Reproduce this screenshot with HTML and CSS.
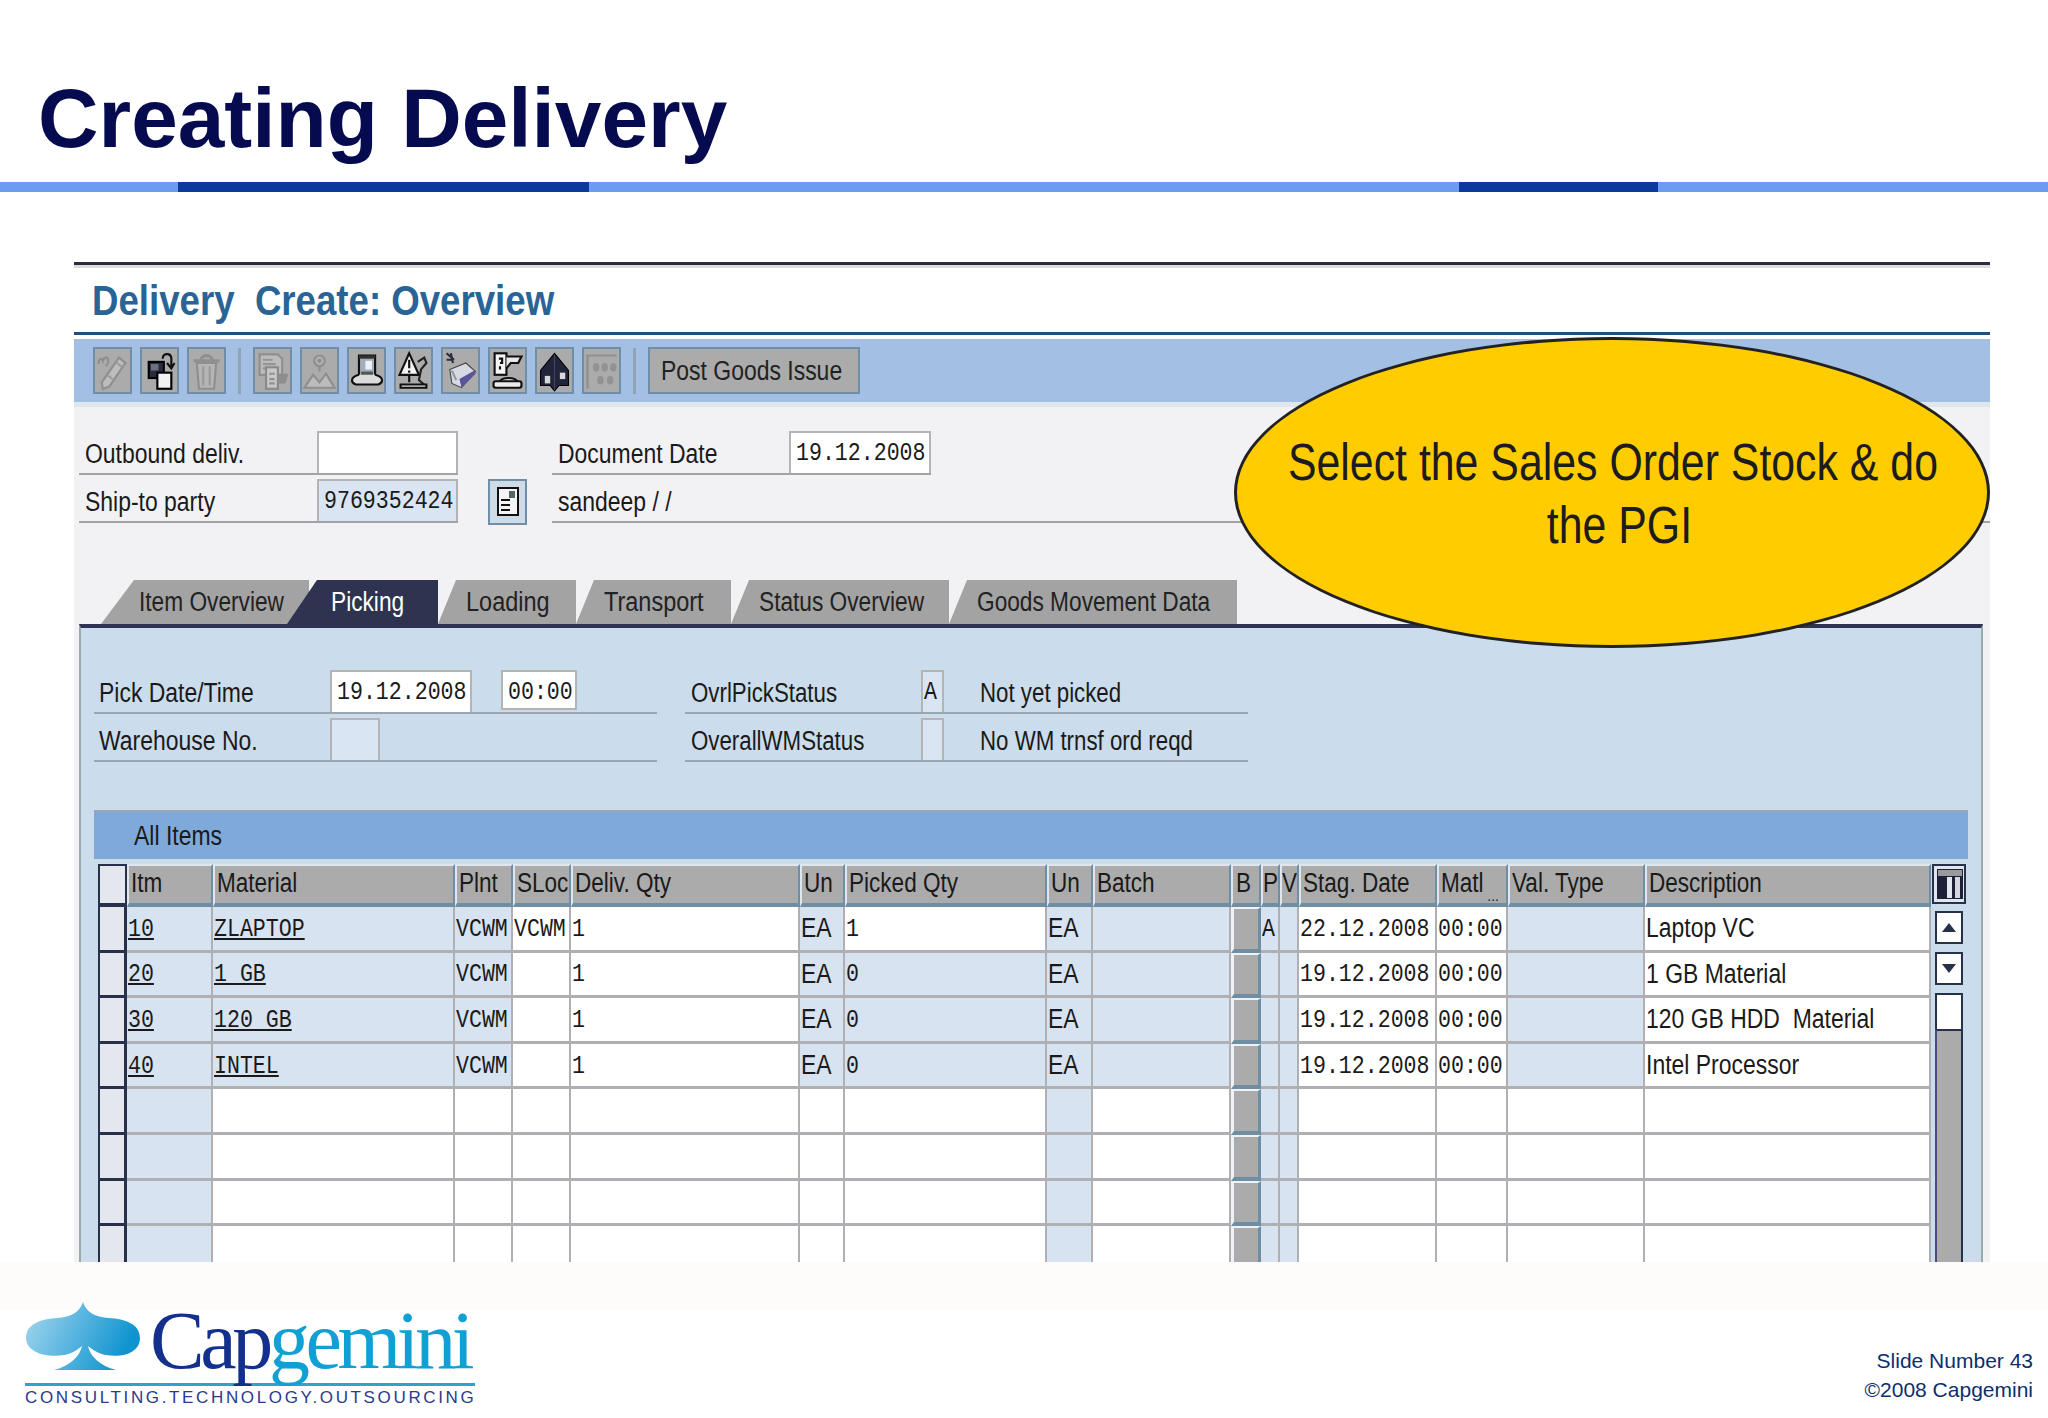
FILE: index.html
```html
<!DOCTYPE html>
<html lang="en">
  <head>
    <meta charset="UTF-8" />
    <title>Creating Delivery</title>
    <link rel="stylesheet" href="styles.css">
  </head>
  <body>
    <div class="slide">
      <h1 class="slide-title">Creating Delivery</h1>
      <div class="rule">
        <div class="rule-a"></div>
        <div class="rule-b"></div>
        <div class="rule-c"></div>
        <div class="rule-d"></div>
        <div class="rule-e"></div>
      </div>

      <div class="sap">
        <div class="sap-title"><span class="t">Delivery  Create: Overview</span></div>

        <!-- toolbar -->
        <div class="toolbar">
          <div class="tool off">
            <svg viewBox="0 0 32 40"><path d="M22 8l6 5-15 22-6 2-1-6z" fill="#bdbdbd" stroke="#8f8f8f" stroke-width="2"/><path d="M19 12l6 5M11 24l5 4" stroke="#9c9c9c" stroke-width="2"/><path d="M3 14c0-5 3-6 4-3 1-4 5-4 5 0 0 3-1 3-2 5" fill="none" stroke="#8f8f8f" stroke-width="2"/></svg>
          </div>
          <div class="tool">
            <svg viewBox="0 0 32 40"><rect x="6" y="12" width="14" height="15" fill="#2a2d40" stroke="#000" stroke-width="2"/><rect x="8" y="14" width="7" height="6" fill="#6d7080"/><rect x="14" y="22" width="13" height="15" fill="#f2f2f2" stroke="#000" stroke-width="2"/><path d="M19 9c0-5 7-6 8-1v9M23 13l4 5 3-5" fill="none" stroke="#111" stroke-width="2"/></svg>
          </div>
          <div class="tool off">
            <svg viewBox="0 0 32 40"><path d="M4 11h24M11 10c0-5 10-5 10 0" fill="none" stroke="#8f8f8f" stroke-width="3"/><path d="M7 13h18l-2 24H9z" fill="#b5b5b5" stroke="#8f8f8f" stroke-width="2"/><path d="M13 16v18M19 16v18" stroke="#9a9a9a" stroke-width="2"/></svg>
          </div>
          <div class="tool-sep"></div>
          <div class="tool off">
            <svg viewBox="0 0 32 40"><path d="M4 5h17l4 4v15H4z" fill="#bcbcbc" stroke="#8f8f8f" stroke-width="2"/><path d="M7 10h9M7 14h12M7 18h5" stroke="#959595" stroke-width="2"/><rect x="10" y="17" width="11" height="20" fill="#c8c8c8" stroke="#8a8a8a" stroke-width="2"/><path d="M13 23h5M13 28h5M13 32h5" stroke="#8f8f8f" stroke-width="2"/><path d="M21 23h10l-3 9h-7z" fill="#8d8d8d"/></svg>
          </div>
          <div class="tool off">
            <svg viewBox="0 0 32 40"><circle cx="16" cy="11" r="5" fill="#b0b0b0" stroke="#8f8f8f" stroke-width="2"/><circle cx="16" cy="11" r="2" fill="#8f8f8f"/><path d="M16 16v5" stroke="#8f8f8f" stroke-width="2"/><path d="M2 36l8-12 6 7 6-8 8 13z" fill="#bcbcbc" stroke="#8f8f8f" stroke-width="2"/></svg>
          </div>
          <div class="tool">
            <svg viewBox="0 0 32 40"><path d="M9 6h15v22H9z" fill="#a4aebb" stroke="#111" stroke-width="2"/><path d="M9 6h15v3H9z" fill="#333"/><rect x="15" y="11" width="6" height="8" fill="#eef2f6"/><rect x="11" y="21" width="11" height="4" fill="#555"/><path d="M9 24c-8 2-8 7-3 9h21c5-2 5-7-3-9" fill="#dcdcdc" stroke="#111" stroke-width="2"/></svg>
          </div>
          <div class="tool">
            <svg viewBox="0 0 32 40"><path d="M12 4L3 24h18z" fill="#f4f4f4" stroke="#111" stroke-width="2"/><path d="M12 10v8M12 20v2" stroke="#111" stroke-width="2"/><path d="M20 12l6-4 2 5-5 6-2 10 6 5" fill="none" stroke="#222" stroke-width="2"/><path d="M12 24v7M4 33h24v3H4z" fill="#e0e0e0" stroke="#111" stroke-width="2"/></svg>
          </div>
          <div class="tool">
            <svg viewBox="0 0 32 40"><path d="M3 4l7 6M7 4l2 9M3 10h6" stroke="#2a2d40" stroke-width="2"/><path d="M6 19l15-6 9 8-13 15-9-4z" fill="#d7d9e4" stroke="#444" stroke-width="1"/><path d="M15 28l14-8 1 3-13 13z" fill="#5a5599"/><path d="M8 20l4 9" stroke="#999" stroke-width="2"/></svg>
          </div>
          <div class="tool">
            <svg viewBox="0 0 32 40"><rect x="4" y="4" width="11" height="20" fill="#f4f4f4" stroke="#111" stroke-width="2"/><path d="M8 9h3v4H9M9 16v3" fill="none" stroke="#111" stroke-width="2"/><path d="M15 7h14l-3 6h-7l-4 5" fill="#e8e8e8" stroke="#111" stroke-width="2"/><path d="M9 30c2-4 14-4 16 0" fill="#ddd" stroke="#111" stroke-width="2"/><rect x="3" y="30" width="26" height="6" rx="2" fill="#ececec" stroke="#111" stroke-width="2"/></svg>
          </div>
          <div class="tool">
            <svg viewBox="0 0 32 40"><path d="M16 4l13 16v14h-9l-4 5-4-5H3V20z" fill="#22243c" stroke="#000"/><path d="M16 5v33" stroke="#44465e"/><rect x="7" y="25" width="5" height="7" fill="#d8d8d8"/><rect x="21" y="22" width="5" height="6" fill="#d8d8d8"/></svg>
          </div>
          <div class="tool off">
            <svg viewBox="0 0 32 40"><path d="M3 37V6h27" fill="none" stroke="#8f8f8f" stroke-width="2"/><ellipse cx="11" cy="17" rx="3" ry="4" fill="#929292"/><ellipse cx="19" cy="17" rx="3" ry="4" fill="#929292"/><ellipse cx="27" cy="17" rx="3" ry="4" fill="#929292"/><ellipse cx="15" cy="29" rx="3" ry="4" fill="#929292"/><ellipse cx="24" cy="29" rx="3" ry="4" fill="#929292"/></svg>
          </div>
          <div class="tool-sep"></div>
          <div class="tool-btn"><span class="t">Post Goods Issue</span></div>
        </div>

        <div class="sap-body">
          <!-- header fields -->
          <div class="head-form">
            <div class="field">
              <span class="label"><span class="t">Outbound deliv.</span></span>
              <span class="input head-input"></span>
            </div>
            <div></div>
            <div class="field field-short">
              <span class="label doc-label"><span class="t">Document Date</span></span>
              <span class="input date-input"><span class="m">19.12.2008</span></span>
            </div>
            <div class="field">
              <span class="label"><span class="t">Ship-to party</span></span>
              <span class="input readonly head-input"><span class="m">9769352424</span></span>
            </div>
            <div class="addr-cell">
              <div class="addr-btn">
                <svg viewBox="0 0 30 36" width="30" height="36"><rect x="5" y="4" width="20" height="27" fill="#f5f5f5" stroke="#111" stroke-width="2"/><rect x="16" y="7" width="6" height="7" fill="#566"/><path d="M8 16h9M8 21h9M8 26h9" stroke="#111" stroke-width="2"/></svg>
              </div>
            </div>
            <div class="field">
              <span class="label doc-label"><span class="t">sandeep / /</span></span>
            </div>
          </div>

          <!-- tabs -->
          <div class="tabs">
            <div class="tab tab-first"><span class="t">Item Overview</span></div>
            <div class="tab tab-active"><span class="t">Picking</span></div>
            <div class="tab tab-wide"><span class="t">Loading</span></div>
            <div class="tab tab-wide"><span class="t">Transport</span></div>
            <div class="tab"><span class="t">Status Overview</span></div>
            <div class="tab"><span class="t">Goods Movement Data</span></div>
          </div>

          <div class="panel">
            <div class="pick-form">
              <div class="pick-col">
                <div class="field">
                  <span class="label pick-label"><span class="t">Pick Date/Time</span></span>
                  <span class="input pick-date"><span class="m">19.12.2008</span></span>
                  <span class="input pick-time"><span class="m">00:00</span></span>
                </div>
                <div class="field">
                  <span class="label pick-label"><span class="t">Warehouse No.</span></span>
                  <span class="input readonly wh-input"></span>
                </div>
              </div>
              <div class="pick-col status-col">
                <div class="field">
                  <span class="label status-label"><span class="t">OvrlPickStatus</span></span>
                  <span class="input readonly status-input"><span class="m">A</span></span>
                  <span class="label status-text"><span class="t">Not yet picked</span></span>
                </div>
                <div class="field">
                  <span class="label status-label"><span class="t">OverallWMStatus</span></span>
                  <span class="input readonly status-input"></span>
                  <span class="label status-text"><span class="t">No WM trnsf ord reqd</span></span>
                </div>
              </div>
            </div>

            <!-- all items table -->
            <div class="group">
              <div class="group-title"><span class="t">All Items</span></div>
              <div class="grid-wrap">
                <table class="items">
                  <colgroup>
                    <col class="c-sel"><col class="c-itm"><col class="c-mat"><col class="c-pl"><col class="c-pl">
                    <col class="c-qty"><col class="c-un1"><col class="c-pick"><col class="c-un2"><col class="c-batch">
                    <col class="c-b"><col class="c-p"><col class="c-p"><col class="c-date"><col class="c-time">
                    <col class="c-val"><col class="c-desc">
                  </colgroup>
                  <thead>
                    <tr>
                      <th class="sel-head"></th><th><span class="t">Itm</span></th><th><span class="t">Material</span></th><th><span class="t">Plnt</span></th><th><span class="t">SLoc</span></th>
                      <th><span class="t">Deliv. Qty</span></th><th><span class="t">Un</span></th><th><span class="t">Picked Qty</span></th><th><span class="t">Un</span></th><th><span class="t">Batch</span></th>
                      <th class="th-center"><span class="t">B</span></th><th class="th-tight"><span class="t">P</span></th><th class="th-tight"><span class="t">V</span></th><th><span class="t">Stag. Date</span></th><th class="th-matl"><span class="t">Matl</span><span class="dots">...</span></th>
                      <th><span class="t">Val. Type</span></th><th><span class="t">Description</span></th>
                    </tr>
                  </thead>
                  <tbody>
                    <tr>
                      <td class="sel"></td><td class="blue"><u class="m">10</u></td><td class="blue"><u class="m">ZLAPTOP</u></td><td class="blue"><span class="m">VCWM</span></td><td><span class="m">VCWM</span></td>
                      <td><span class="m">1</span></td><td class="blue"><span class="t">EA</span></td><td><span class="m">1</span></td><td class="blue"><span class="t">EA</span></td><td class="blue"></td>
                      <td class="btn"></td><td class="blue"><span class="m">A</span></td><td class="blue"></td><td><span class="m">22.12.2008</span></td><td><span class="m">00:00</span></td>
                      <td class="blue"></td><td><span class="t">Laptop VC</span></td>
                    </tr>
                    <tr>
                      <td class="sel"></td><td class="blue"><u class="m">20</u></td><td class="blue"><u class="m">1 GB</u></td><td class="blue"><span class="m">VCWM</span></td><td></td>
                      <td><span class="m">1</span></td><td class="blue"><span class="t">EA</span></td><td class="blue"><span class="m">0</span></td><td class="blue"><span class="t">EA</span></td><td class="blue"></td>
                      <td class="btn"></td><td class="blue"></td><td class="blue"></td><td><span class="m">19.12.2008</span></td><td><span class="m">00:00</span></td>
                      <td class="blue"></td><td><span class="t">1 GB Material</span></td>
                    </tr>
                    <tr>
                      <td class="sel"></td><td class="blue"><u class="m">30</u></td><td class="blue"><u class="m">120 GB</u></td><td class="blue"><span class="m">VCWM</span></td><td></td>
                      <td><span class="m">1</span></td><td class="blue"><span class="t">EA</span></td><td class="blue"><span class="m">0</span></td><td class="blue"><span class="t">EA</span></td><td class="blue"></td>
                      <td class="btn"></td><td class="blue"></td><td class="blue"></td><td><span class="m">19.12.2008</span></td><td><span class="m">00:00</span></td>
                      <td class="blue"></td><td><span class="t">120 GB HDD  Material</span></td>
                    </tr>
                    <tr>
                      <td class="sel"></td><td class="blue"><u class="m">40</u></td><td class="blue"><u class="m">INTEL</u></td><td class="blue"><span class="m">VCWM</span></td><td></td>
                      <td><span class="m">1</span></td><td class="blue"><span class="t">EA</span></td><td class="blue"><span class="m">0</span></td><td class="blue"><span class="t">EA</span></td><td class="blue"></td>
                      <td class="btn"></td><td class="blue"></td><td class="blue"></td><td><span class="m">19.12.2008</span></td><td><span class="m">00:00</span></td>
                      <td class="blue"></td><td><span class="t">Intel Processor</span></td>
                    </tr>
                    <tr>
                      <td class="sel"></td><td class="blue"></td><td></td><td></td><td></td><td></td><td></td><td></td><td class="blue"></td><td></td>
                      <td class="btn"></td><td class="blue"></td><td class="blue"></td><td></td><td></td><td></td><td></td>
                    </tr>
                    <tr>
                      <td class="sel"></td><td class="blue"></td><td></td><td></td><td></td><td></td><td></td><td></td><td class="blue"></td><td></td>
                      <td class="btn"></td><td class="blue"></td><td class="blue"></td><td></td><td></td><td></td><td></td>
                    </tr>
                    <tr>
                      <td class="sel"></td><td class="blue"></td><td></td><td></td><td></td><td></td><td></td><td></td><td class="blue"></td><td></td>
                      <td class="btn"></td><td class="blue"></td><td class="blue"></td><td></td><td></td><td></td><td></td>
                    </tr>
                    <tr>
                      <td class="sel"></td><td class="blue"></td><td></td><td></td><td></td><td></td><td></td><td></td><td class="blue"></td><td></td>
                      <td class="btn"></td><td class="blue"></td><td class="blue"></td><td></td><td></td><td></td><td></td>
                    </tr>
                  </tbody>
                </table>

                <div class="scroll">
                  <div class="config">
                    <svg viewBox="0 0 26 30" width="26" height="30"><rect width="26" height="30" fill="#1d2036"/><rect x="1" y="1" width="24" height="6" fill="#9a9a9a"/><rect x="10" y="8" width="5" height="21" fill="#e4e6ee"/><rect x="18" y="8" width="5" height="21" fill="#d4d6de"/></svg>
                  </div>
                  <div class="arrow"><span class="tri-up"></span></div>
                  <div class="arrow"><span class="tri-down"></span></div>
                  <div class="slider"></div>
                  <div class="track"></div>
                </div>
              </div>
            </div>
          </div>
        </div>

        <!-- callout over the screen -->
        <div class="callout">
          <span class="callout-line">Select the Sales Order Stock &amp; do</span>
          <span class="callout-line callout-short">the PGI</span>
        </div>
      </div>

      <div class="footer">
        <div class="logo">
          <div class="logo-top">
            <svg class="spade" viewBox="0 0 116 70" width="116" height="70">
              <defs>
                <linearGradient id="spadeFill" x1="0" y1="0" x2="1" y2="0.3">
                  <stop offset="0" stop-color="#a8d8f0"/>
                  <stop offset="1" stop-color="#0f94cf"/>
                </linearGradient>
              </defs>
              <path d="M58 0c3 10 12 15 26 16 16 1 31 6 31 20 0 15-18 20-34 17-8-1-14-6-18-9 2 10 12 20 28 24H29c16-4 26-14 28-24-4 3-10 8-18 9C23 56 1 51 1 36c0-14 15-19 31-20C46 15 55 10 58 0z" fill="url(#spadeFill)"/>
            </svg>
            <div class="wordmark"><span class="cap">Cap</span><span class="gem">gemini</span></div>
          </div>
          <div class="logo-line"></div>
          <div class="tagline">CONSULTING.TECHNOLOGY.OUTSOURCING</div>
        </div>
        <div class="slide-info">
          <div>Slide Number 43</div>
          <div>©2008 Capgemini</div>
        </div>
      </div>
    </div>
  </body>
</html>
```

FILE: styles.css
```css
* {
  box-sizing: border-box;
}

body {
  margin: 0;
  background-color: #fff;
  font-family: 'Liberation Sans', Arial, sans-serif;
}

.slide {
  width: 2048px;
  height: 1418px;
  overflow: hidden;
  display: flex;
  flex-direction: column;
}

.slide-title {
  margin: 0;
  height: 182px;
  padding: 70px 0 0 38px;
  font-size: 83.8px;
  line-height: 96px;
  font-weight: bold;
  color: #060b4f;
}

.rule {
  display: flex;
  height: 10px;
  flex: none;
}

.rule-a { width: 178px; background-color: #6c9cf2; }
.rule-b { width: 411px; background-color: #0a3a9c; }
.rule-c { width: 870px; background-color: #6c9cf2; }
.rule-d { width: 199px; background-color: #0a3a9c; }
.rule-e { flex: 1; background-color: #6c9cf2; }

/* narrow screen text: the capture squeezes it sideways */
.t {
  display: inline-block;
  transform: scaleX(.85);
  transform-origin: 0 50%;
  white-space: pre;
}

.m {
  display: inline-block;
  transform: scaleX(.83);
  transform-origin: 0 50%;
  font-family: 'Liberation Mono', monospace;
  font-size: 26px;
  white-space: pre;
}

/* sap window */
.sap {
  position: relative;
  flex: none;
  width: 1916px;
  height: 1000px;
  margin: 70px 0 0 74px;
  overflow: hidden;
  font-family: 'Liberation Sans', sans-serif;
  font-size: 27px;
  color: #1a1a1a;
  border-top: 3px solid #2c2c3c;
}

.sap-title {
  height: 70px;
  padding: 11px 0 0 18px;
  font-size: 42px;
  line-height: 50px;
  font-weight: bold;
  color: #2a6496;
  box-shadow: inset 0 3px 0 #ddd;
  border-bottom: 3px solid #1f4f7f;
}

.sap-title .t {
  transform: scaleX(.872);
}

.toolbar {
  display: flex;
  align-items: center;
  gap: 8px;
  height: 68px;
  margin-top: 4px;
  padding: 0 0 0 19px;
  background-color: #a3bfe3;
  border-bottom: 5px solid #dfe7ea;
}

.tool {
  width: 39px;
  height: 47px;
  background-color: #ababab;
  border: 2px solid #6f8ea8;
}

.tool svg {
  display: block;
  width: 100%;
  height: 100%;
}

.tool-sep {
  width: 3px;
  height: 46px;
  margin: 0 4px;
  background-color: #8fa3b8;
}

.tool-btn {
  width: 212px;
  height: 47px;
  padding-left: 11px;
  background-color: #ababab;
  border: 2px solid #6f8ea8;
  line-height: 44px;
  color: #222;
}

.sap-body {
  background-color: #f2f2f5;
}

/* fields */
.head-form {
  display: grid;
  grid-template-columns: 379px 94px 1fr;
  grid-template-rows: 42px 42px;
  row-gap: 6px;
  padding: 26px 0 0 5px;
}

.field {
  display: flex;
  align-items: flex-end;
  height: 42px;
  border-bottom: 2px solid #a3a3a3;
}

.field-short {
  width: 379px;
}

.label {
  display: block;
  flex: none;
  width: 238px;
  padding-left: 6px;
  padding-bottom: 1px;
  line-height: 36px;
  white-space: nowrap;
}

.doc-label {
  width: 237px;
}

.input {
  display: block;
  flex: none;
  height: 42px;
  padding-left: 5px;
  line-height: 36px;
  background-color: #fff;
  border: 2px solid #b4b4b4;
  border-bottom: none;
}

.readonly {
  background-color: #d9e5f2;
}

.head-input {
  width: 141px;
}

.date-input {
  width: 142px;
}

.addr-cell {
  padding: 0 0 0 30px;
}

.addr-btn {
  width: 39px;
  height: 46px;
  margin-top: -2px;
  padding: 3px 0 0 3px;
  background-color: #cfdce8;
  border: 2px solid #6f8ea8;
}

.addr-btn svg {
  display: block;
}

/* tabs */
.tabs {
  display: flex;
  height: 44px;
  margin-top: 57px;
  padding-left: 27px;
}

.tab {
  position: relative;
  height: 44px;
  padding: 0 0 0 28px;
  line-height: 44px;
  white-space: nowrap;
  background-color: #a3a3a3;
  color: #222;
  clip-path: polygon(18px 0, 100% 0, 100% 100%, 0 100%);
}

.tab .t {
  transform: scaleX(.84);
}

.tab-wide .t {
  transform: scaleX(.87);
}

.tab:nth-child(3) { width: 138px; }
.tab:nth-child(4) { width: 155px; }
.tab:nth-child(5) { width: 218px; }
.tab:nth-child(6) { width: 288px; }

.tab-first {
  width: 208px;
  padding-left: 38px;
  clip-path: polygon(33px 0, 100% 0, 100% 100%, 0 100%);
}

.tab-active {
  width: 151px;
  margin-left: -22px;
  padding-left: 44px;
  background-color: #2e3450;
  color: #fff;
  clip-path: polygon(30px 0, 100% 0, 100% 100%, 0 100%);
}

.panel {
  margin: 0 7px 0 5px;
  padding: 44px 13px 0;
  height: 700px;
  background-color: #cbdcec;
  border-top: 4px solid #2e3450;
  border-left: 2px solid #9aa;
  border-right: 2px solid #9aa;
}

.pick-form {
  display: flex;
  gap: 28px;
}

.pick-col {
  width: 563px;
  display: flex;
  flex-direction: column;
  gap: 6px;
}

.status-col .t {
  transform: scaleX(.825);
}

.pick-form .field {
  border-bottom-color: #9aa6b2;
}

.pick-label {
  width: 236px;
  padding-left: 5px;
}

.pick-date {
  width: 142px;
}

.pick-time {
  width: 76px;
  height: 40px;
  margin-left: 29px;
  margin-bottom: 2px;
  border-bottom: 2px solid #b4b4b4;
}

.wh-input {
  width: 50px;
}

.status-label {
  width: 236px;
}

.status-input {
  width: 23px;
  padding-left: 1px;
}

.status-text {
  width: auto;
  padding-left: 36px;
}

/* table */
.group {
  margin-top: 48px;
}

.group-title {
  height: 49px;
  padding-left: 40px;
  line-height: 48px;
  background-color: #7fa9d8;
  border-top: 2px solid #9aa6b2;
}

.grid-wrap {
  display: flex;
  align-items: flex-start;
  margin-top: 5px;
  padding-left: 4px;
}

.items {
  flex: none;
  width: 1833px;
  table-layout: fixed;
  border-collapse: separate;
  border-spacing: 0;
  background-color: #fff;
}

.c-sel { width: 29px; }
.c-itm { width: 86px; }
.c-mat { width: 242px; }
.c-pl { width: 58px; }
.c-qty { width: 229px; }
.c-un1 { width: 45px; }
.c-pick { width: 202px; }
.c-un2 { width: 46px; }
.c-batch { width: 138px; }
.c-b { width: 30px; }
.c-p { width: 19px; }
.c-date { width: 138px; }
.c-time { width: 71px; }
.c-val { width: 137px; }
.c-desc { width: 286px; }

.items th {
  height: 43px;
  padding: 0 0 2px 2px;
  background-color: #ababab;
  border-top: 2px solid #dfe6ee;
  border-left: 2px solid #dfe6ee;
  border-right: 2px solid #6f8ea3;
  border-bottom: 4px solid #6f8ea3;
  font-weight: normal;
  text-align: left;
  white-space: nowrap;
  overflow: hidden;
}

.items th .t {
  transform: scaleX(.835);
}

.items .sel-head {
  background-color: #e4e8ee;
  border: 2px solid #27324a;
  border-bottom-width: 4px;
}

.items .th-center {
  padding-left: 3px;
}

.items .th-tight {
  padding-left: 0;
}

.items .th-matl {
  position: relative;
}

.dots {
  position: absolute;
  right: 7px;
  bottom: 0;
  font-size: 14px;
  line-height: 14px;
}

.items td {
  height: 45.6px;
  padding: 0 0 0 1px;
  border-right: 2px solid #b0b0b4;
  border-bottom: 3px solid #b0b0b4;
  white-space: nowrap;
  overflow: hidden;
}

.items td .m {
  vertical-align: 1px;
}

.items td .t {
  vertical-align: -1px;
}

.items td.blue {
  background-color: #d7e3f0;
}

.items td.sel {
  background-color: #e4e8ee;
  border: none;
  border-left: 2px solid #27324a;
  border-right: 3px solid #27324a;
  border-bottom: 3px solid #27324a;
}

.items td.btn {
  background-color: #ababab;
  border-top: 2px solid #eef2f6;
  border-left: 3px solid #eef2f6;
  border-right: 3px solid #6f8ea3;
  border-bottom: 4px solid #6f8ea3;
}

.scroll {
  flex: none;
  display: flex;
  flex-direction: column;
  align-items: center;
  width: 36px;
}

.config {
  width: 34px;
  height: 40px;
  margin-bottom: 7px;
  padding: 3px;
  background-color: #dfe6ee;
  border: 2px solid #27324a;
}

.config svg {
  display: block;
}

.arrow {
  display: flex;
  align-items: center;
  justify-content: center;
  width: 28px;
  height: 33px;
  margin-bottom: 8px;
  background-color: #fff;
  border: 2px solid #27324a;
}

.tri-up {
  border-left: 7px solid transparent;
  border-right: 7px solid transparent;
  border-bottom: 9px solid #27324a;
}

.tri-down {
  border-left: 7px solid transparent;
  border-right: 7px solid transparent;
  border-top: 9px solid #27324a;
}

.slider {
  width: 28px;
  height: 36px;
  background-color: #fff;
  border: 2px solid #27324a;
  border-bottom: none;
}

.track {
  width: 28px;
  height: 300px;
  background-color: #ababab;
  border: 2px solid #27324a;
  border-left-color: #4a4a80;
  border-bottom: none;
}

/* yellow bubble */
.callout {
  position: absolute;
  left: 1160px;
  top: 72px;
  width: 756px;
  height: 311px;
  padding: 2px 0 0 2px;
  display: flex;
  flex-direction: column;
  align-items: center;
  justify-content: center;
  border-radius: 50%;
  background-color: #ffcc00;
  border: 3px solid #222;
  font-size: 51px;
  line-height: 63px;
  color: #1c1c1c;
}

.callout-line {
  white-space: nowrap;
  transform: scaleX(.84);
}

.callout-short {
  margin-left: 12px;
}

/* footer */
.footer {
  flex: 1;
  display: flex;
  justify-content: space-between;
  padding: 40px 15px 0 25px;
  background: linear-gradient(#fdfcfa 48px, #fff 48px);
}

.logo {
  width: 450px;
}

.logo-top {
  display: flex;
  align-items: flex-start;
  height: 81px;
}

.spade {
  flex: none;
}

.wordmark {
  margin-left: 9px;
  font-family: 'Liberation Serif', serif;
  font-size: 82px;
  line-height: 78px;
  letter-spacing: -4.4px;
  white-space: nowrap;
}

.cap {
  color: #12308c;
}

.gem {
  color: #10a0d4;
}

.logo-line {
  height: 3px;
  background-color: #2aa5cf;
}

.tagline {
  margin-top: 2px;
  font-size: 17px;
  line-height: 20px;
  letter-spacing: 2.65px;
  color: #2a3a8c;
  white-space: nowrap;
}

.slide-info {
  margin-top: 44px;
  text-align: right;
  font-size: 21px;
  line-height: 29px;
  color: #0c2f6b;
}
```
